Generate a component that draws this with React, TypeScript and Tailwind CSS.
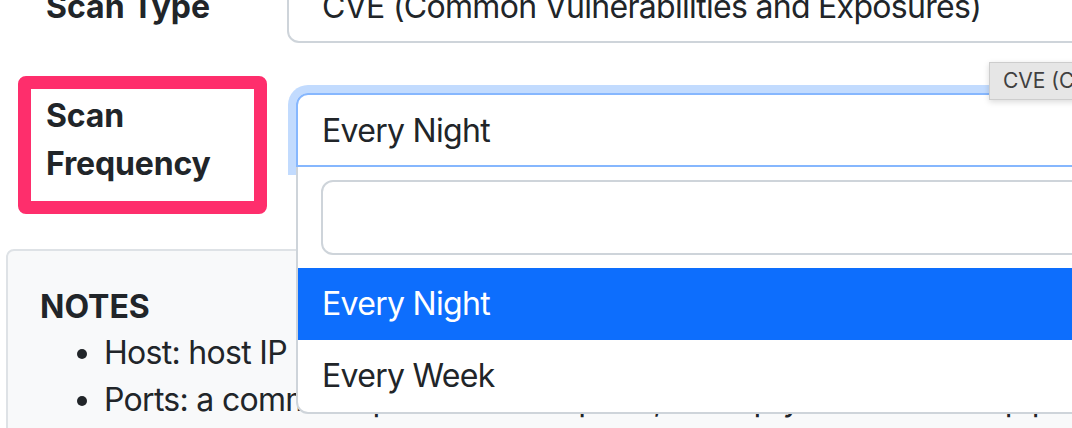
const font = { fontFamily: 'Inter, "Noto Sans", "Liberation Sans", sans-serif' };

const App = () => {
  return (
    <div
      className="relative w-[1072px] h-[428px] overflow-hidden bg-white text-[#212529] text-[32px] leading-[48px] tracking-[-0.7px]"
      style={font}
    >
      {/* Scan Type row */}
      <div className="flex mt-[-31px]">
        <div className="w-[287px] shrink-0 pl-[46px] pt-[14px] font-bold tracking-normal">Scan Type</div>
        <div className="w-[900px] shrink-0 border-2 border-[#ced4da] rounded-[12px] pl-[33px] pt-[12px] pb-[10px] whitespace-nowrap">
          CVE (Common Vulnerabilities and Exposures)
        </div>
      </div>

      {/* Scan Frequency row */}
      <div className="flex items-start mt-[33px]">
        <div className="w-[287px] shrink-0">
          <div className="ml-[18px] w-[249px] h-[138px] border-[13px] border-[#fe2e6c] rounded-[8px] pl-[15px] pt-[3px] font-bold tracking-[-0.15px]">
            Scan
            <br />
            Frequency
          </div>
        </div>
        <div className="ml-[9px] mt-[17px] w-[900px] shrink-0 h-[74px] border-2 border-[#86b7fe] rounded-tl-[12px] shadow-[0_0_0_8px_rgba(13,110,253,0.25)] pl-[24px] pt-[12px] whitespace-nowrap">
          Every Night
        </div>
      </div>

      {/* Notes */}
      <div className="ml-[6px] mt-[35px] w-[1200px] h-[300px] bg-[#f8f9fa] border-2 border-[#dee2e6] rounded-[8px] pl-[32px] pt-[32px]">
        <div className="font-bold tracking-normal">NOTES</div>
        <ul className="list-disc pl-[64px] mt-[-2px] leading-[47px] whitespace-nowrap">
          <li>Host: host IP address or hostname to be scanned</li>
          <li>Ports: a comma separated list of ports, or empty to scan the top ports</li>
        </ul>
      </div>

      {/* Select2 dropdown */}
      <div className="absolute left-[296px] top-[167px] w-[900px] bg-white border-2 border-t-0 border-[#ced4da] rounded-bl-[12px]">
        <div className="pl-[23px] pt-[13px] pb-[13px]">
          <div className="w-[860px] h-[75px] border-2 border-[#ced4da] rounded-[12px] bg-white" />
        </div>
        <div className="bg-[#0d6efd] text-white pl-[24px] py-[12px] whitespace-nowrap">Every Night</div>
        <div className="pl-[24px] pt-[12px] pb-[12px] whitespace-nowrap">Every Week</div>
      </div>

      {/* Browser tooltip */}
      <div className="absolute left-[989px] top-[62px] h-[38px] bg-[#e6e6e6] border border-[#cdcdcd] shadow-[0_2px_6px_rgba(0,0,0,0.15)] pl-[13px] pr-[10px] text-[21px] leading-[36px] tracking-normal text-[#404040] whitespace-nowrap">
        CVE (Common Vulnerabilities and Exposures)
      </div>
    </div>
  );
};

export default App;
